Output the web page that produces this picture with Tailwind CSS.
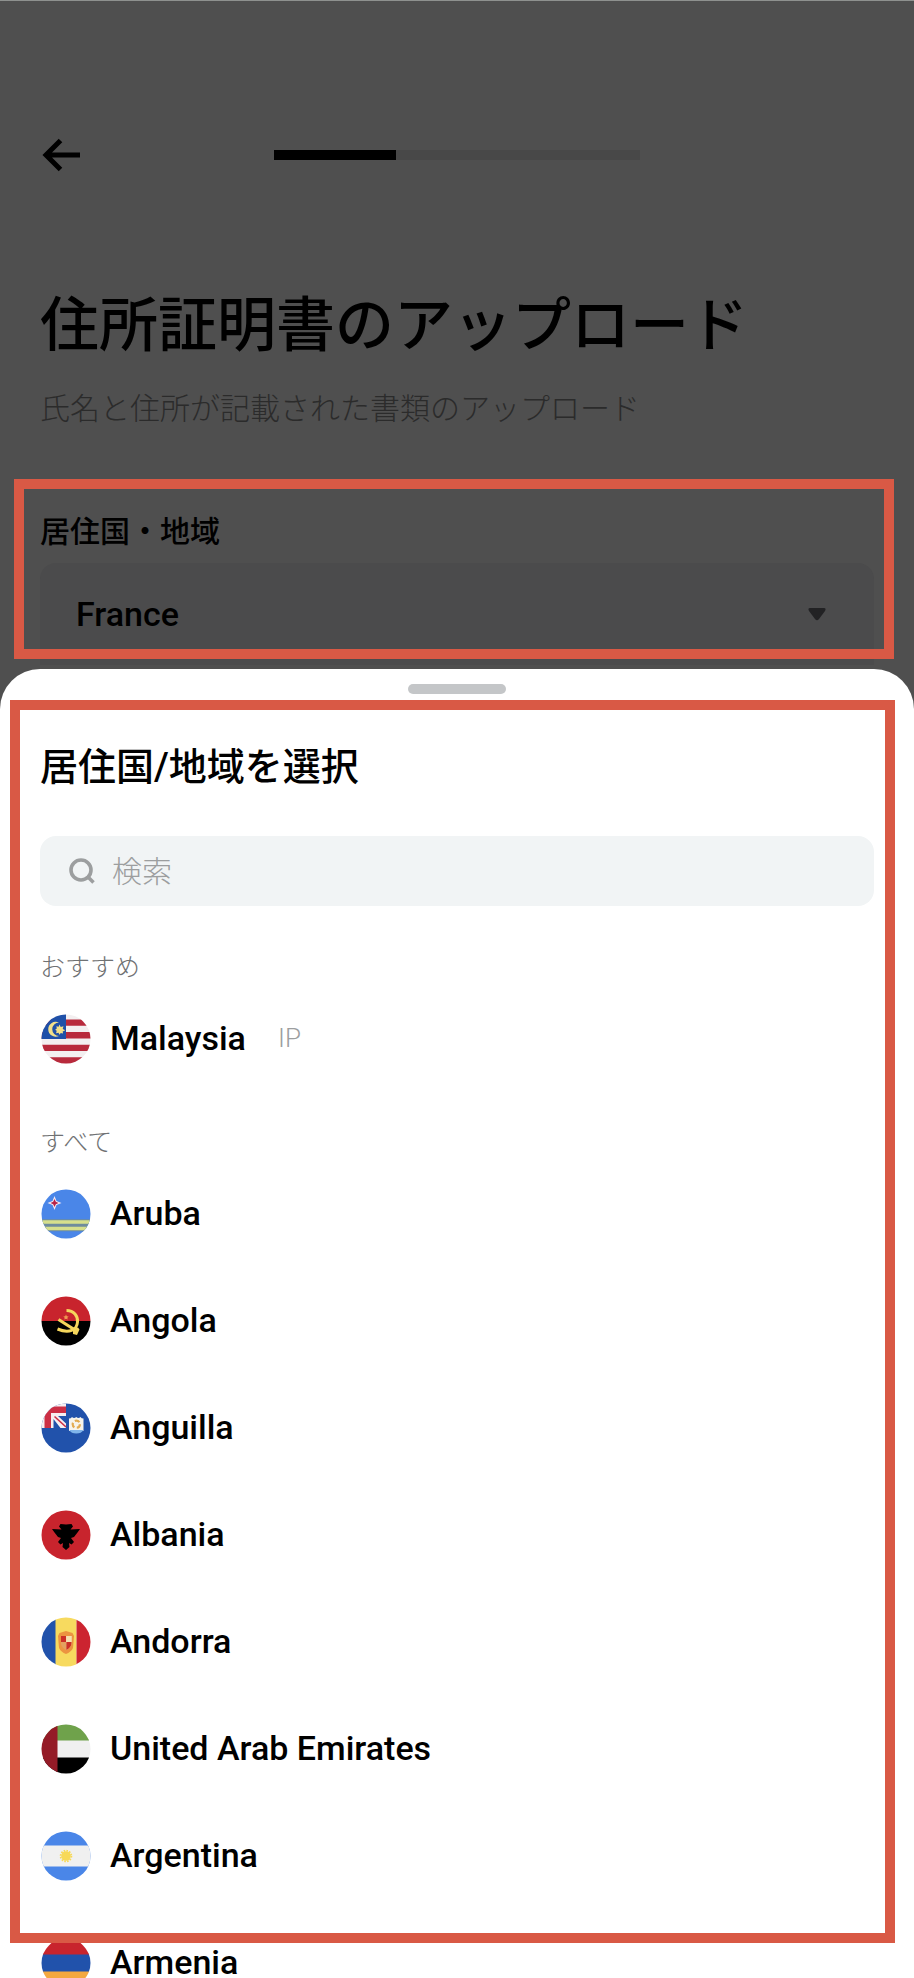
<!DOCTYPE html>
<html lang="ja">
<head>
    <meta charset="UTF-8">
    <meta name="viewport" content="width=device-width, initial-scale=1.0">
    <title>住所証明書のアップロード</title>
    <script src="https://cdn.jsdelivr.net/npm/@tailwindcss/browser@4"></script>
</head>
<body class="h-screen flex flex-col overflow-hidden border-t border-[#8e918f] bg-[#4f4f4f] font-['Roboto','Noto_Sans_CJK_JP',sans-serif] text-black">
    <!-- Page behind the sheet -->
    <header class="grid grid-cols-5 items-center h-15 mt-31 px-10 shrink-0">
        <button type="button" aria-label="戻る" class="justify-self-start">
            <svg class="w-11 h-11" viewBox="0 0 44 44" fill="none" stroke="#000" stroke-width="5">
                <path d="M40 22H6M20.500 7.500 6 22l14.500 14.500"/>
            </svg>
        </button>
        <div class="col-span-3 justify-self-center w-[366px] h-[10px] bg-[#484848]" role="progressbar" aria-label="進捗" aria-valuenow="33" aria-valuemin="0" aria-valuemax="100">
            <div class="h-full w-1/3 bg-black"></div>
        </div>
    </header>

    <main class="shrink-0">
        <h1 class="mt-[101px] px-10 text-[59px] leading-20 font-medium">住所証明書のアップロード</h1>
        <p class="mt-[23px] px-10 text-[30px] leading-10 text-[#2b2b2b] font-light">氏名と住所が記載された書類のアップロード</p>

        <div class="relative mt-[50px] pt-8 px-10">
            <label for="country" class="block text-[30px] leading-[42px] font-medium">居住国・地域</label>
            <div class="relative mt-[10px]">
                <select id="country" class="appearance-none block w-full h-[102px] px-9 rounded-t-2xl bg-[#4b4b4c] text-[34px] font-medium">
                    <option>France</option>
                </select>
                <svg class="absolute right-[47px] top-11 w-5 h-4 pointer-events-none" viewBox="0 0 20 16" fill="#222224">
                    <path d="M3 1h14q2.500 0 1 3l-6 8q-2 2.500-4 0L2 4q-1.500-3 1-3z"/>
                </svg>
            </div>
            <div class="absolute top-0 left-3.5 right-5 h-45 border-10 border-[#d95945] pointer-events-none"></div>
        </div>
    </main>

    <!-- Country sheet -->
    <section class="relative flex-1 min-h-0 mt-1 px-10 pt-[15px] bg-white rounded-t-[40px] overflow-hidden">
        <div class="mx-auto w-[98px] h-[10px] rounded-full bg-[#c4c6c8]"></div>
        <h2 class="mt-12 text-[38px] leading-[50px] font-medium">居住国/地域を選択</h2>

        <div class="flex items-center gap-4 mt-11 h-[70px] px-7 rounded-2xl bg-[#f1f4f5]">
            <svg class="w-7 h-7 shrink-0" viewBox="0 0 28 28" fill="none" stroke="#9c9e9f" stroke-width="3.600">
                <circle cx="13" cy="13" r="10"/>
                <path d="m19 19 6.500 6.500"/>
            </svg>
            <input type="search" aria-label="検索" placeholder="検索" class="flex-1 h-full text-[30px] font-light outline-none placeholder:text-[#9c9e9f]">
        </div>

        <h3 class="mt-[47px] text-[25px] leading-[30px] font-light text-[#6f7173]">おすすめ</h3>
        <ul class="mt-[2px]">
            <li>
                <button type="button" class="flex items-center gap-[18px] w-full h-[107px] text-left text-[34px] font-medium">
                    <svg class="w-13 h-13" viewBox="-26 -26 52 52">
                        <clipPath id="round"><circle r="24.500"/></clipPath>
                        <g clip-path="url(#round)">
                            <path fill="#f3eff0" d="M-25-25h50v50h-50z"/>
                            <path fill="#b82a3c" d="M-25-19.500h50v6.200h-50zM-25-7h50v6.400h-50zM-25 5.700h50v6.300h-50zM-25 18.300h50v7h-50z"/>
                            <path fill="#1f50a8" d="M-25-25H0V0h-25z"/>
                            <path fill="#f2e08a" d="M-7-16.500a7.500 7.500 0 1 0 0 13.500 6 6 0 1 1 0-13.500z"/>
                            <path fill="#f2e08a" d="m-6.500-14.500 1.200 2.500 2.800-.8-.8 2.800 2.500 1.200-2.500 1.200.4 2-2.400-.4-1.200 1.800-1-2-2.400.4.600-2.400-1.500-1 1.600-1.200-.4-2.400 2.200.6z"/>
                        </g>
                    </svg>
                    <span>Malaysia</span>
                    <span class="pl-[14px] text-[26px] font-light text-[#9c9e9f]">IP</span>
                </button>
            </li>
        </ul>

        <h3 class="mt-9 text-[25px] leading-[30px] font-light text-[#6f7173]">すべて</h3>
        <ul class="mt-[2px]">
            <li>
                <button type="button" class="flex items-center gap-[18px] w-full h-[107px] text-left text-[34px] font-medium">
                    <svg class="w-13 h-13" viewBox="-26 -26 52 52">
                        <g clip-path="url(#round)">
                            <path fill="#4a86e8" d="M-25-25h50v50h-50z"/>
                            <path fill="#6f8c9c" d="M-25 5.200h50v12h-50z"/>
                            <path fill="#d6df8c" d="M-25 6.200h50v3.600h-50zM-25 12.800h50v3.400h-50z"/>
                            <path fill="#f4e9f2" d="m-11.500-18 2 5 5 2-5 2-2 5-2-5-5-2 5-2z"/>
                            <path fill="#b52348" d="m-11.500-15 1.300 2.700 2.700 1.300-2.700 1.300-1.300 2.700-1.300-2.700-2.700-1.300 2.700-1.300z"/>
                        </g>
                    </svg>
                    <span>Aruba</span>
                </button>
            </li>
            <li>
                <button type="button" class="flex items-center gap-[18px] w-full h-[107px] text-left text-[34px] font-medium">
                    <svg class="w-13 h-13" viewBox="-26 -26 52 52">
                        <g clip-path="url(#round)">
                            <path fill="#c8242d" d="M-25-25h50V0h-50z"/>
                            <path d="M-25 0h50v25h-50z"/>
                            <path fill="none" stroke="#f5d65c" stroke-width="3" d="M.5-10.500C8-10.500 12-5 11.500 1 11 9 3 13-8.500 8"/>
                            <path stroke="#f5d65c" stroke-width="3.200" d="M-7.500-1.500 9 9"/>
                            <path fill="#f5d65c" d="m7 8 5-1.500 1.500 2-2.500 5.500-4-1z"/>
                            <path fill="#f09a52" d="m0-6.500.8 1.700 1.900.2-1.400 1.300.4 1.900L0-2.300l-1.700.9.400-1.900-1.400-1.300 1.900-.2z"/>
                        </g>
                    </svg>
                    <span>Angola</span>
                </button>
            </li>
            <li>
                <button type="button" class="flex items-center gap-[18px] w-full h-[107px] text-left text-[34px] font-medium">
                    <svg class="w-13 h-13" viewBox="-26 -26 52 52">
                        <g clip-path="url(#round)">
                            <path fill="#2152ab" d="M-25-25h50v50h-50z"/>
                            <path fill="#f6eff1" d="M-25-25H0V0h-25z"/>
                            <path fill="#cc2f45" d="M-21.500-21.500H0v6.500h-15V0h-6.500z"/>
                            <path fill="#2152ab" d="M-8-12H0v7.500zM-12.500-9V0h7z"/>
                            <path stroke="#cc2f45" stroke-width="1.600" d="M-11.500-11.500 0-1"/>
                            <path fill="#f7f4ec" d="M3-9.500q2 0 3-1.500 2 2 4.200 0 2.300 2 4.300 0 1 1.500 3 1.500V3H3z"/>
                            <path fill="#7fb4ea" d="M3.200 2h14.200q-2 3.500-7.100 3.500T3.200 2z"/>
                            <circle cx="10.300" cy="-3.800" r="3.600" fill="none" stroke="#e3ab50" stroke-width="2.200" stroke-dasharray="5 2.500"/>
                        </g>
                    </svg>
                    <span>Anguilla</span>
                </button>
            </li>
            <li>
                <button type="button" class="flex items-center gap-[18px] w-full h-[107px] text-left text-[34px] font-medium">
                    <svg class="w-13 h-13" viewBox="-26 -26 52 52">
                        <g clip-path="url(#round)">
                            <path fill="#c8242d" d="M-25-25h50v50h-50z"/>
                            <path d="M-5.500-11 0-10.500 5.500-11 7-8.500 4.500-5.500l9.500-.5-2.500 3.500L8 2 5 3l3 4-2.500 2.500L3 8l.5 4L0 15l-3.500-3 .5-4-2.500 1.500L-8 7l3-4-3-1-3.500-4.500L-14-6l9.500.5L-7-8.500z"/>
                        </g>
                    </svg>
                    <span>Albania</span>
                </button>
            </li>
            <li>
                <button type="button" class="flex items-center gap-[18px] w-full h-[107px] text-left text-[34px] font-medium">
                    <svg class="w-13 h-13" viewBox="-26 -26 52 52">
                        <g clip-path="url(#round)">
                            <path fill="#2152ab" d="M-25-25h15v50h-15z"/>
                            <path fill="#f7da5f" d="M-10.500-25h21v50h-21z"/>
                            <path fill="#cc2430" d="M10.500-25h15v50h-15z"/>
                            <path fill="#ec9440" d="M-6.500-9 0-11l6.500 2L8-6 7 6q-2 4-7 6-5-2-7-6L-8-6z"/>
                            <path fill="#f5e1b0" d="M-5-6H5.500V2q-1 4-5.300 6Q-4-6-5 2z"/>
                            <path fill="#cc2f26" d="M-5-6H.2v6H-5zM.2 0h5.300v2q-1 4-5.300 6z"/>
                            <path fill="#f5e1b0" d="M.2-6h5.300v6H.2z"/>
                            <path fill="#e4a05f" d="M-5 0H.2v8Q-4 6-5 2z"/>
                        </g>
                    </svg>
                    <span>Andorra</span>
                </button>
            </li>
            <li>
                <button type="button" class="flex items-center gap-[18px] w-full h-[107px] text-left text-[34px] font-medium">
                    <svg class="w-13 h-13" viewBox="-26 -26 52 52">
                        <g clip-path="url(#round)">
                            <path fill="#6fa24b" d="M-25-25h50v17h-50z"/>
                            <path fill="#f0f0f0" d="M-25-8.500h50V9h-50z"/>
                            <path d="M-25 8.500h50v17h-50z"/>
                            <path fill="#941b27" d="M-25-25h16.500v50H-25z"/>
                        </g>
                    </svg>
                    <span>United Arab Emirates</span>
                </button>
            </li>
            <li>
                <button type="button" class="flex items-center gap-[18px] w-full h-[107px] text-left text-[34px] font-medium">
                    <svg class="w-13 h-13" viewBox="-26 -26 52 52">
                        <g clip-path="url(#round)">
                            <path fill="#4a86e8" d="M-25-25h50v50h-50z"/>
                            <path fill="#f0f0f0" d="M-25-10.500h50v21h-50z"/>
                            <circle r="4.800" fill="#f7d958"/>
                            <circle r="5.400" fill="none" stroke="#f7d958" stroke-width="1.800" stroke-dasharray="1.600 1.200"/>
                        </g>
                    </svg>
                    <span>Argentina</span>
                </button>
            </li>
            <li>
                <button type="button" class="flex items-center gap-[18px] w-full h-[107px] text-left text-[34px] font-medium">
                    <svg class="w-13 h-13" viewBox="-26 -26 52 52">
                        <g clip-path="url(#round)">
                            <path fill="#c8242d" d="M-25-25h50v17h-50z"/>
                            <path fill="#2152ab" d="M-25-8.500h50V9h-50z"/>
                            <path fill="#f3a840" d="M-25 8.500h50v17h-50z"/>
                        </g>
                    </svg>
                    <span>Armenia</span>
                </button>
            </li>
        </ul>

        <div class="absolute top-[31px] bottom-[35px] left-[10px] right-[19px] border-10 border-[#d95945] pointer-events-none"></div>
    </section>
</body>
</html>
